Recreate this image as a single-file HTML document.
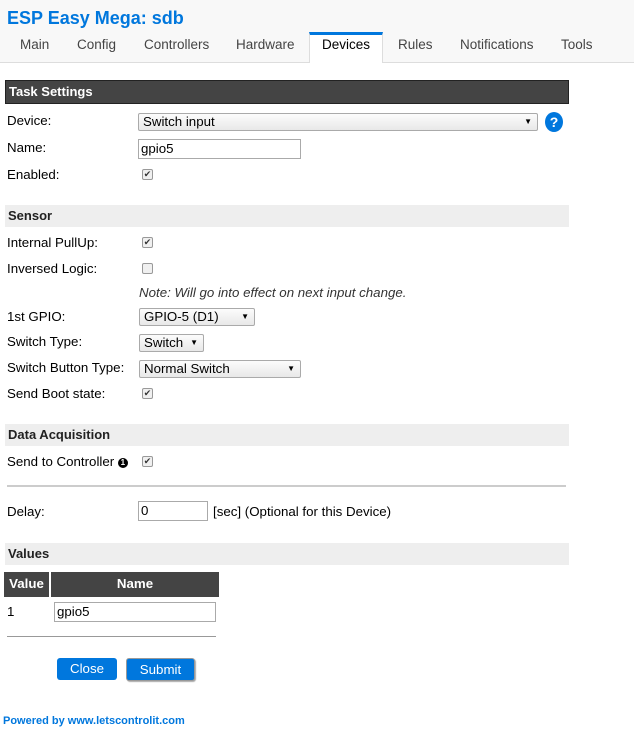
<!DOCTYPE html>
<html><head><style>
body{margin:0;width:634px;height:750px;background:#fff;font-family:"Liberation Sans",sans-serif;font-size:13.3px;color:#000;position:relative;overflow:hidden}
.a{position:absolute;white-space:nowrap}
.hdr{position:absolute;left:0;top:0;width:634px;height:62px;background:#f8f8f8;border-bottom:1px solid #ddd}
.tab{position:absolute;top:37px;font-size:13.5px;color:#444}
.bar{position:absolute;left:5px;width:564px;height:22px;background:#eee;font-weight:bold;font-size:13px;line-height:22px;padding-left:3px;box-sizing:border-box;color:#222}
.dark{background:#444;color:#fff;border:1px solid #222}
.lbl{position:absolute;left:7px;font-size:13.3px}
.cb{position:absolute;left:142px;width:9px;height:9px;border:1px solid #999;border-radius:2px;background:#f0f0f0;font-size:9px;line-height:9px;text-align:center;color:#333}
.sel{position:absolute;height:18px;border:1px solid #aaa;border-radius:2px;background:linear-gradient(#fcfcfc,#e8e8e8);box-sizing:border-box;font-size:13.3px;line-height:16px;padding-left:4px}
.sel:after{content:"▼";position:absolute;right:5px;top:0;font-size:8px}
.inp{position:absolute;height:20px;border:1px solid #aaa;box-sizing:border-box;font-size:13.3px;line-height:18px;padding-left:2px}
.hr{position:absolute;height:0;border-top:2px solid #ccc}
.btn{position:absolute;top:658px;height:22px;background:#07d;color:#fff;border-radius:3px;text-align:center;line-height:22px;font-size:13.3px}
</style></head><body>
<div class="hdr"></div>
<div class="a" style="left:7px;top:8px;font-size:18px;font-weight:bold;color:#07d">ESP Easy Mega: sdb</div>
<div style="position:absolute;left:309px;top:32px;width:74px;height:31px;background:#fff;border-top:3px solid #07d;box-sizing:border-box;border-left:1px solid #ddd;border-right:1px solid #ddd"></div>
<div class="tab" style="left:20px">Main</div>
<div class="tab" style="left:77px">Config</div>
<div class="tab" style="left:144px">Controllers</div>
<div class="tab" style="left:236px">Hardware</div>
<div class="tab" style="left:322px;color:#000">Devices</div>
<div class="tab" style="left:398px">Rules</div>
<div class="tab" style="left:460px">Notifications</div>
<div class="tab" style="left:561px">Tools</div>

<div class="bar dark" style="top:80px;height:24px;line-height:22px">Task Settings</div>
<div class="lbl" style="top:113px">Device:</div>
<div class="sel" style="left:138px;top:113px;width:400px">Switch input</div>
<div style="position:absolute;left:545px;top:112px;width:18px;height:20px;border-radius:50%;background:#07d;color:#fff;font-weight:bold;font-size:14px;text-align:center;line-height:20px">?</div>
<div class="lbl" style="top:140px">Name:</div>
<div class="inp" style="left:138px;top:139px;width:163px">gpio5</div>
<div class="lbl" style="top:167px">Enabled:</div>
<div class="cb" style="top:169px">✔</div>

<div class="bar" style="top:205px">Sensor</div>
<div class="lbl" style="top:235px">Internal PullUp:</div>
<div class="cb" style="top:237px">✔</div>
<div class="lbl" style="top:261px">Inversed Logic:</div>
<div class="cb" style="top:263px"></div>
<div class="a" style="left:139px;top:285px;font-style:italic;color:#333">Note: Will go into effect on next input change.</div>
<div class="lbl" style="top:309px">1st GPIO:</div>
<div class="sel" style="left:139px;top:308px;width:116px">GPIO-5 (D1)</div>
<div class="lbl" style="top:334px">Switch Type:</div>
<div class="sel" style="left:139px;top:334px;width:65px">Switch</div>
<div class="lbl" style="top:360px">Switch Button Type:</div>
<div class="sel" style="left:139px;top:360px;width:162px">Normal Switch</div>
<div class="lbl" style="top:386px">Send Boot state:</div>
<div class="cb" style="top:388px">✔</div>

<div class="bar" style="top:424px">Data Acquisition</div>
<div class="lbl" style="top:454px">Send to Controller <span style="display:inline-block;width:10px;height:10px;border-radius:50%;background:#000;color:#fff;font-size:8px;line-height:10px;text-align:center;font-weight:bold;vertical-align:1px">1</span></div>
<div class="cb" style="top:456px">✔</div>
<div class="hr" style="left:7px;top:485px;width:559px"></div>
<div class="lbl" style="top:504px">Delay:</div>
<div class="inp" style="left:138px;top:501px;width:70px">0</div>
<div class="a" style="left:213px;top:504px">[sec] (Optional for this Device)</div>

<div class="bar" style="top:543px">Values</div>
<div style="position:absolute;left:4px;top:572px;width:45px;height:25px;background:#444;color:#fff;font-weight:bold;text-align:center;line-height:24px">Value</div>
<div style="position:absolute;left:51px;top:572px;width:168px;height:25px;background:#444;color:#fff;font-weight:bold;text-align:center;line-height:24px">Name</div>
<div class="lbl" style="top:604px">1</div>
<div class="inp" style="left:54px;top:602px;width:162px">gpio5</div>
<div class="hr" style="left:7px;top:636px;width:209px;border-top-width:1px;border-color:#999"></div>
<div class="btn" style="left:57px;width:60px">Close</div>
<div class="btn" style="left:126px;width:69px;border:1px solid #999;box-sizing:border-box;top:658px;height:23px;box-shadow:1px 1px 1px #aaa">Submit</div>
<div class="a" style="left:3px;top:715px;font-size:11px;font-weight:bold;color:#07d">Powered by www.letscontrolit.com</div>
</body></html>
